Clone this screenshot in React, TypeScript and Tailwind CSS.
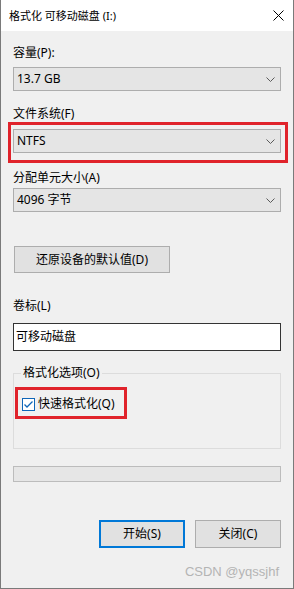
import React from "react";

const font = { fontFamily: '"Noto Sans", "Noto Sans CJK SC", sans-serif' };

function Chevron() {
  return (
    <svg width="9" height="5" viewBox="0 0 9 5" className="shrink-0">
      <path d="M0.5 0.5 L4.5 4.5 L8.5 0.5" fill="none" stroke="#5a5a5a" strokeWidth="1" />
    </svg>
  );
}

function Combo({ text, mt }: { text: string; mt: string }) {
  return (
    <div
      className={`${mt} h-[24px] w-full flex items-center justify-between border border-[#adadad] bg-[#e5e5e5] pl-[3px] pr-[5px] text-[12px] text-black`}
    >
      <span>{text}</span>
      <Chevron />
    </div>
  );
}

export default function App() {
  return (
    <div
      style={font}
      className="relative w-[294px] h-[589px] bg-[#f0f0f0] border-x border-b border-[#7a7a7a] flex flex-col text-[12px] leading-[16px] text-black overflow-hidden"
    >
      {/* title bar */}
      <div className="h-[31px] bg-white flex items-center justify-between pl-[8px] pr-[9px] shrink-0">
        <span className="text-[11px]">格式化 可移动磁盘 (I:)</span>
        <svg width="11" height="11" viewBox="0 0 11 11">
          <path d="M0.5 0.5 L10.5 10.5 M10.5 0.5 L0.5 10.5" stroke="#000" strokeWidth="1" />
        </svg>
      </div>

      <div className="flex flex-col px-3">
        <div className="mt-[14px] h-[16px]">容量(P):</div>
        <Combo text="13.7 GB" mt="mt-[6px]" />

        <div className="mt-[15px] h-[16px]">文件系统(F)</div>
        <Combo text="NTFS" mt="mt-[7px]" />

        <div className="mt-[17px] h-[16px]">分配单元大小(A)</div>
        <Combo text="4096 字节" mt="mt-[2px]" />

        <button className="mt-[34px] ml-[1px] h-[27px] w-[156px] border border-[#adadad] bg-[#e1e1e1] text-[12px] flex items-center justify-center">
          还原设备的默认值(D)
        </button>

        <div className="mt-[25px] h-[16px]">卷标(L)</div>
        <div className="mt-[9px] h-[28px] w-full border border-[#333] bg-white flex items-center pl-[2px] text-[12px]">
          可移动磁盘
        </div>

        <fieldset className="mt-[14px] h-[84px] border border-[#dcdcdc] px-0 m-0">
          <legend className="ml-[7px] px-[2px] text-[12px] leading-[16px]">格式化选项(O)</legend>
          <div className="mt-[15px] ml-[8px] flex items-center gap-[3px]">
            <svg width="13" height="13" viewBox="0 0 13 13" className="shrink-0">
              <rect x="0.5" y="0.5" width="12" height="12" fill="#fff" stroke="#0f66b8" />
              <path d="M2.5 6.5 L5 9 L10.5 3.5" fill="none" stroke="#0f66b8" strokeWidth="1.3" />
            </svg>
            <span>快速格式化(Q)</span>
          </div>
        </fieldset>

        <div className="mt-[17px] h-[16px] w-full border border-[#bcbcbc] bg-[#e6e6e6]" />

        <div className="mt-[38px] flex justify-end gap-[10px]">
          <button className="h-[28px] w-[86px] border-2 border-[#0078d7] bg-[#e1e1e1] text-[12px] flex items-center justify-center">
            开始(S)
          </button>
          <button className="h-[28px] w-[86px] border border-[#adadad] bg-[#e1e1e1] text-[12px] flex items-center justify-center">
            关闭(C)
          </button>
        </div>

        <div
          className="mt-[16px] h-[16px] flex justify-end pr-[2px] text-[13px] leading-[16px] text-[#b4b4b4]"
          style={{ fontFamily: '"Liberation Sans", "Noto Sans", sans-serif' }}
        >
          CSDN @yqssjhf
        </div>
      </div>

      {/* annotation boxes */}
      <div className="absolute left-[7px] top-[122px] w-[280px] h-[41px] border-[3px] border-[#e0232b] pointer-events-none" />
      <div className="absolute left-[14px] top-[387px] w-[112px] h-[32px] border-[3px] border-[#e0232b] pointer-events-none" />
    </div>
  );
}
